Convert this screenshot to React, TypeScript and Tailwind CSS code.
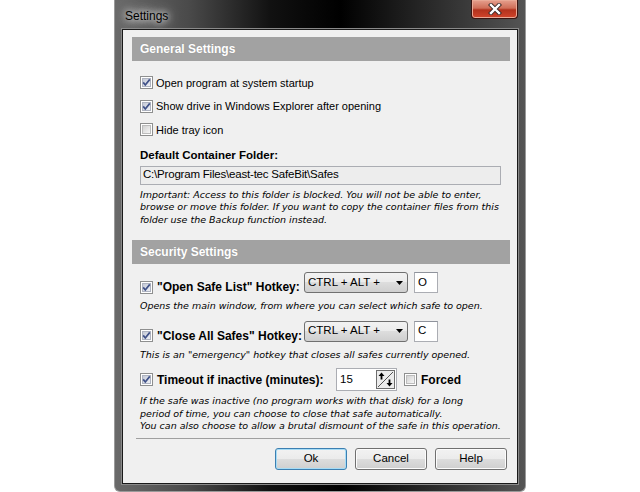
import React from 'react'

const ui = { fontFamily: '"Liberation Sans", Arial, sans-serif' }
const note = { fontFamily: '"DejaVu Sans", Verdana, sans-serif' }

const Check = ({ checked }: { checked: boolean }) => (
  <span className="relative flex h-[13px] w-[13px] shrink-0 items-center justify-center border border-[#8e8f8f] bg-white">
    {checked ? (
      <span className="h-[9px] w-[9px] border border-[#aeb3c0] bg-[linear-gradient(135deg,#c4c9d6,#eef0f5)]" />
    ) : (
      <span className="h-[9px] w-[9px] border border-[#bcbcbc] bg-[linear-gradient(135deg,#d2d2d2,#f6f6f6)]" />
    )}
    {checked && (
      <svg className="absolute left-0 top-0" width="11" height="11" viewBox="0 0 11 11">
        <path d="M2.2 5.4 L4.3 8 L8.8 2.4" fill="none" stroke="#3f5188" strokeWidth="1.7" />
      </svg>
    )}
  </span>
)

const Header = ({ title }: { title: string }) => (
  <div className="ml-[9px] mr-[7px] flex h-[24px] items-center bg-[#a2a2a2] pl-[8px] text-[12px] font-bold text-white [text-shadow:0_0_1px_#8a8a8a]">
    {title}
  </div>
)

const Combo = () => (
  <div className="flex h-[21px] w-[104px] items-center justify-between rounded-[3px] border border-[#707070] bg-[linear-gradient(#f2f2f2_0%,#ebebeb_50%,#dddddd_50%,#cfcfcf_100%)] pl-[3px] pr-[4px] text-[11.5px] text-black">
    <span>CTRL + ALT +</span>
    <svg width="7" height="4" viewBox="0 0 7 4">
      <path d="M0 0 H7 L3.5 4 Z" fill="#000" />
    </svg>
  </div>
)

const KeyBox = ({ value }: { value: string }) => (
  <div className="ml-[6px] flex h-[21px] w-[24px] items-center border border-[#abadb3] border-t-[#8f939c] bg-white pl-[3px] text-[11.5px]">
    {value}
  </div>
)

const Btn = ({ label, focused }: { label: string; focused?: boolean }) =>
  focused ? (
    <div className="flex h-[22px] w-[72px] items-center justify-center rounded-[3px] border border-[#3c7fb1] bg-[linear-gradient(#f2f2f2_0%,#ebebeb_50%,#dddddd_50%,#cfcfcf_100%)] text-[11.5px] shadow-[inset_0_0_0_1px_#a6dcf6]">
      {label}
    </div>
  ) : (
    <div className="flex h-[22px] w-[72px] items-center justify-center rounded-[3px] border border-[#707070] bg-[linear-gradient(#f2f2f2_0%,#ebebeb_50%,#dddddd_50%,#cfcfcf_100%)] text-[11.5px] shadow-[inset_0_0_0_1px_#fcfcfc]">
      {label}
    </div>
  )

export default function App() {
  return (
    <div className="flex h-[492px] w-[640px] justify-center overflow-hidden bg-white" style={ui}>
      <div className="flex h-[492px] w-[412px] flex-col rounded-b-[6px] border-x border-b border-[#9a9a9a] bg-[linear-gradient(90deg,#6a6a6a_0%,#4a4a4a_18%,#111_38%,#000_55%,#262626_75%,#555_100%)] px-[7px] pb-[7px]">
        <div className="flex h-[29px] shrink-0 items-start justify-between">
          <div className="mt-[7px] pl-[3px] text-[12px] text-black [text-shadow:0_0_6px_#e8e8e8,0_0_10px_#d0d0d0,0_0_14px_#c0c0c0]">
            Settings
          </div>
          <div className="relative flex h-[19px] w-[47px] items-center justify-center rounded-b-[4px] border border-t-0 border-[#3b1410] bg-[linear-gradient(#e6a08e_0%,#cf6e58_45%,#b3321d_55%,#d2452b_100%)] shadow-[inset_0_0_0_1px_#e9a996]">
            <svg width="14" height="12" viewBox="0 0 14 12">
              <path d="M3 2 L11 10 M11 2 L3 10" stroke="#3b2a28" strokeWidth="4.2" strokeLinecap="square" />
              <path d="M3 2 L11 10 M11 2 L3 10" stroke="#ffffff" strokeWidth="2.4" strokeLinecap="square" />
            </svg>
          </div>
        </div>
        <div className="flex flex-1 flex-col border border-[#1a1a1a] bg-[#f0f0f0] pt-[7px] text-[11px] text-black shadow-[0_0_0_1px_#8a8a8a]">
          <Header title="General Settings" />
          <div className="mt-[10px] flex flex-col pl-[17px]">
            <label className="flex h-[23.5px] items-center gap-[3px]"><Check checked />Open program at system startup</label>
            <label className="flex h-[23.5px] items-center gap-[3px]"><Check checked />Show drive in Windows Explorer after opening</label>
            <label className="flex h-[23.5px] items-center gap-[3px]"><Check checked={false} />Hide tray icon</label>
            <div className="mt-[7px] flex h-[14px] items-center text-[11.5px] font-bold">Default Container Folder:</div>
            <div className="mt-[3px] flex h-[19px] w-[361px] items-center border border-[#abadb3] bg-[#ededed] pl-[2px] text-[11.5px] tracking-[-0.2px]">
              C:\Program Files\east-tec SafeBit\Safes
            </div>
            <div className="mt-[4px] text-[9.5px] italic leading-[12.5px] text-black" style={note}>
              Important: Access to this folder is blocked. You will not be able to enter,<br />
              browse or move this folder. If you want to copy the container files from this<br />
              folder use the Backup function instead.
            </div>
          </div>
          <div className="mt-[14px]">
            <Header title="Security Settings" />
          </div>
          <div className="flex flex-col pl-[17px]">
            <div className="mt-[8px] flex h-[21px] items-start">
              <div className="mt-[6px] flex w-[164px] items-center gap-[4px] text-[12px] font-bold"><Check checked />"Open Safe List" Hotkey:</div>
              <Combo />
              <KeyBox value="O" />
            </div>
            <div className="mt-[7px] text-[9.5px] italic leading-[12.5px] text-black" style={note}>
              Opens the main window, from where you can select which safe to open.
            </div>
            <div className="mt-[8px] flex h-[21px] items-start">
              <div className="mt-[6px] flex w-[164px] items-center gap-[4px] text-[12px] font-bold"><Check checked />"Close All Safes" Hotkey:</div>
              <Combo />
              <KeyBox value="C" />
            </div>
            <div className="mt-[7px] text-[9.5px] italic leading-[12.5px] text-black" style={note}>
              This is an "emergency" hotkey that closes all safes currently opened.
            </div>
            <div className="mt-[7px] flex h-[23px] items-center">
              <div className="flex w-[196px] items-center gap-[4px] text-[12px] font-bold"><Check checked />Timeout if inactive (minutes):</div>
              <div className="flex h-[23px] w-[61px] items-center justify-between border border-[#abadb3] bg-white pl-[3px] pr-[1px] text-[11.5px]">
                <span>15</span>
                <svg width="19" height="19" viewBox="0 0 19 19">
                  <rect x="0.5" y="0.5" width="18" height="18" fill="#ececec" stroke="#6d6d6d" />
                  <path d="M2 17 L17 2" stroke="#555" strokeWidth="1" />
                  <path d="M5.5 2.5 L2.5 6 H4.6 V9.5 H6.4 V6 H8.5 Z" fill="#000" />
                  <path d="M13.5 16.5 L10.5 13 H12.6 V9.5 H14.4 V13 H16.5 Z" fill="#000" />
                </svg>
              </div>
              <div className="ml-[7px] flex items-center gap-[4px] text-[12px] font-bold"><Check checked={false} />Forced</div>
            </div>
            <div className="mt-[4px] text-[9.5px] italic leading-[12.5px] text-black" style={note}>
              If the safe was inactive (no program works with that disk) for a long<br />
              period of time, you can choose to close that safe automatically.<br />
              You can also choose to allow a brutal dismount of the safe in this operation.
            </div>
          </div>
          <div className="ml-[13px] mr-[7px] mt-[5px] h-[2px] border-t border-[#a0a0a0] border-b-white" />
          <div className="mr-[10px] mt-[8px] flex justify-end gap-[8px]">
            <Btn label="Ok" focused />
            <Btn label="Cancel" />
            <Btn label="Help" />
          </div>
        </div>
      </div>
    </div>
  )
}
